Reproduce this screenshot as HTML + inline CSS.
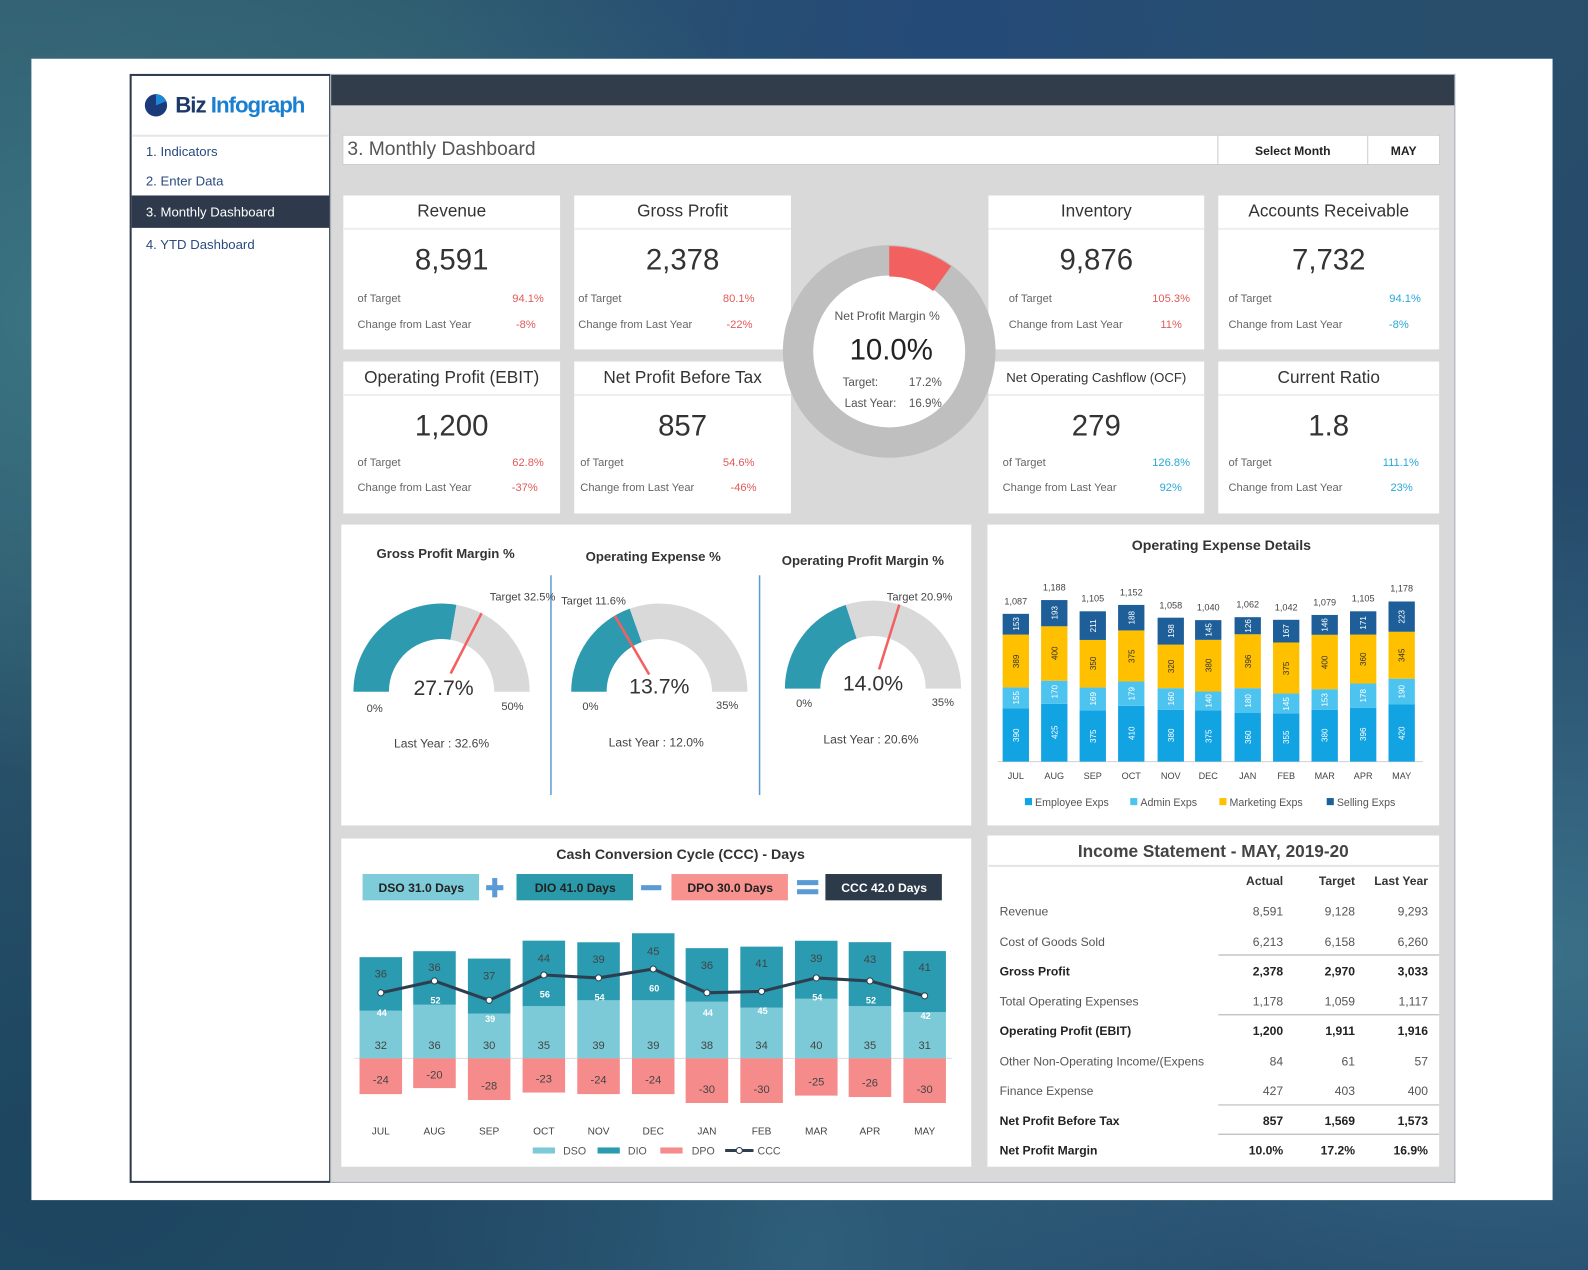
<!DOCTYPE html>
<html><head><meta charset="utf-8">
<style>
*{margin:0;padding:0;box-sizing:border-box}
html,body{width:1588px;height:1270px;overflow:hidden}
body{background:#274d66;background-image:radial-gradient(ellipse at 8% 25%,#3b7684 0,transparent 35%),radial-gradient(ellipse at 60% 3%,#244a78 0,transparent 40%),radial-gradient(ellipse at 97% 75%,#3a7088 0,transparent 35%),radial-gradient(ellipse at 5% 92%,#1c4560 0,transparent 35%),radial-gradient(ellipse at 50% 99%,#2e5f7a 0,transparent 40%),linear-gradient(135deg,#2f5a6c,#22446a);font-family:"Liberation Sans",sans-serif}
#w{position:absolute;left:0;top:0;width:1568px;height:1254px;transform:scale(1.01276);transform-origin:0 0}
.a{position:absolute}
.frame{left:31px;top:58px;width:1502px;height:1127px;background:#fff}
.side{left:128px;top:73px;width:199px;height:1095px;background:#fff;border:2px solid #2e3a4b}
.nav{position:absolute;left:14px;font-size:13px;color:#2a4a80}
.main{left:326px;top:73px;width:1111px;height:1095px;background:#d9d9d9;border:1px solid #a8b0bb}
.card{position:absolute;background:#fff}
.ct{position:absolute;left:0;right:0;top:6px;text-align:center;font-size:17px;color:#333}
.cl{position:absolute;left:0;right:0;top:32px;border-top:2px solid #eee}
.cn{position:absolute;left:0;right:0;top:48px;text-align:center;font-size:29px;color:#333}
.sm{position:absolute;font-size:11px;color:#666}
.r{color:#e05a5a}.c{color:#29a8d6}
.panel{position:absolute;background:#fff}
svg text{font-family:"Liberation Sans",sans-serif}
</style></head><body><div id="w">
<div class="a frame"></div>
<div class="a side">
 <svg class="a" style="left:10px;top:14px" width="30" height="30" viewBox="0 0 30 30"><circle cx="14" cy="15" r="11" fill="#1b3a7a"/><path d="M14 15 L14 4 A11 11 0 0 1 24 11 Z" fill="#1e88d8"/></svg>
 <div class="a" style="left:43px;top:16px;font-size:22px;letter-spacing:-1px;font-weight:bold"><span style="color:#1b3a6b">Biz</span> <span style="color:#1a7fd0">Infograph</span></div>
 <div class="a" style="left:0;right:0;top:58px;border-top:2px solid #e6e6e6"></div>
 <div class="nav" style="top:67px">1. Indicators</div>
 <div class="nav" style="top:96px">2. Enter Data</div>
 <div class="a" style="left:0;right:0;top:118px;height:32px;background:#2e3a4b"></div>
 <div class="nav" style="top:127px;color:#fff">3. Monthly Dashboard</div>
 <div class="nav" style="top:159px">4. YTD Dashboard</div>
</div>
<div class="a main">
 <div class="a" style="left:0;top:0;right:0;height:30px;background:#323d4c"></div>
</div>
<div class="a" style="left:338px;top:133px;width:1084px;height:30px;background:#fff;border:1px solid #c9c9c9"></div>
<div class="a" style="left:343px;top:137px;font-size:19px;color:#555">3. Monthly Dashboard</div>
<div class="a" style="left:1202px;top:134px;width:1px;height:28px;background:#ccc"></div>
<div class="a" style="left:1350px;top:134px;width:1px;height:28px;background:#ccc"></div>
<div class="a" style="left:1203px;top:142px;width:147px;text-align:center;font-size:12px;font-weight:bold;color:#222">Select Month</div>
<div class="a" style="left:1351px;top:142px;width:70px;text-align:center;font-size:12px;font-weight:bold;color:#222">MAY</div>

<div class="card" style="left:339px;top:193px;width:214px;height:152px"><div class="ct">Revenue</div><div class="cl"></div><div class="cn">8,591</div>
<div class="sm" style="left:14px;top:96px">of Target</div><div class="sm r" style="right:16px;top:96px">94.1%</div>
<div class="sm" style="left:14px;top:122px">Change from Last Year</div><div class="sm r" style="right:24px;top:122px">-8%</div></div>
<div class="card" style="left:567px;top:193px;width:214px;height:152px"><div class="ct">Gross Profit</div><div class="cl"></div><div class="cn">2,378</div>
<div class="sm" style="left:4px;top:96px">of Target</div><div class="sm r" style="right:36px;top:96px">80.1%</div>
<div class="sm" style="left:4px;top:122px">Change from Last Year</div><div class="sm r" style="right:38px;top:122px">-22%</div></div>
<div class="card" style="left:976px;top:193px;width:213px;height:152px"><div class="ct">Inventory</div><div class="cl"></div><div class="cn">9,876</div>
<div class="sm" style="left:20px;top:96px">of Target</div><div class="sm r" style="right:14px;top:96px">105.3%</div>
<div class="sm" style="left:20px;top:122px">Change from Last Year</div><div class="sm r" style="right:22px;top:122px">11%</div></div>
<div class="card" style="left:1203px;top:193px;width:218px;height:152px"><div class="ct">Accounts Receivable</div><div class="cl"></div><div class="cn">7,732</div>
<div class="sm" style="left:10px;top:96px">of Target</div><div class="sm c" style="right:18px;top:96px">94.1%</div>
<div class="sm" style="left:10px;top:122px">Change from Last Year</div><div class="sm c" style="right:30px;top:122px">-8%</div></div>

<div class="card" style="left:339px;top:357px;width:214px;height:150px"><div class="ct">Operating Profit (EBIT)</div><div class="cl"></div><div class="cn">1,200</div>
<div class="sm" style="left:14px;top:94px">of Target</div><div class="sm r" style="right:16px;top:94px">62.8%</div>
<div class="sm" style="left:14px;top:119px">Change from Last Year</div><div class="sm r" style="right:22px;top:119px">-37%</div></div>
<div class="card" style="left:567px;top:357px;width:214px;height:150px"><div class="ct">Net Profit Before Tax</div><div class="cl"></div><div class="cn">857</div>
<div class="sm" style="left:6px;top:94px">of Target</div><div class="sm r" style="right:36px;top:94px">54.6%</div>
<div class="sm" style="left:6px;top:119px">Change from Last Year</div><div class="sm r" style="right:34px;top:119px">-46%</div></div>
<div class="card" style="left:976px;top:357px;width:213px;height:150px"><div class="ct" style="font-size:13px;top:8px">Net Operating Cashflow (OCF)</div><div class="cl"></div><div class="cn">279</div>
<div class="sm" style="left:14px;top:94px">of Target</div><div class="sm c" style="right:14px;top:94px">126.8%</div>
<div class="sm" style="left:14px;top:119px">Change from Last Year</div><div class="sm c" style="right:22px;top:119px">92%</div></div>
<div class="card" style="left:1203px;top:357px;width:218px;height:150px"><div class="ct">Current Ratio</div><div class="cl"></div><div class="cn">1.8</div>
<div class="sm" style="left:10px;top:94px">of Target</div><div class="sm c" style="right:20px;top:94px">111.1%</div>
<div class="sm" style="left:10px;top:119px">Change from Last Year</div><div class="sm c" style="right:26px;top:119px">23%</div></div>

<svg class="a" style="left:770px;top:238px" width="220" height="220" viewBox="0 0 220 220">
<circle cx="108" cy="109" r="90" fill="none" stroke="#bfbfbf" stroke-width="30"/>
<circle cx="108" cy="109" r="75" fill="#fff"/>
<path d="M108 5 A104 104 0 0 1 169.1 24.9 L151.5 49.3 A74 74 0 0 0 108 35 Z" fill="#f36060"/>
<text x="106" y="78" font-size="12" fill="#555" text-anchor="middle">Net Profit Margin %</text>
<text x="110" y="117" font-size="29" fill="#222" text-anchor="middle">10.0%</text>
<text x="62" y="143" font-size="11.5" fill="#555">Target:</text><text x="160" y="143" font-size="11.5" fill="#555" text-anchor="end">17.2%</text>
<text x="64" y="164" font-size="11.5" fill="#555">Last Year:</text><text x="160" y="164" font-size="11.5" fill="#555" text-anchor="end">16.9%</text>
</svg>

<div class="panel" style="left:337px;top:518px;width:622px;height:297px"></div>
<svg class="a" style="left:0;top:0" width="1568" height="1254">
<g font-size="12" fill="#333">
<text x="440" y="551" text-anchor="middle" font-weight="bold" font-size="13">Gross Profit Margin %</text>
<text x="645" y="554" text-anchor="middle" font-weight="bold" font-size="13">Operating Expense %</text>
<text x="852" y="558" text-anchor="middle" font-weight="bold" font-size="13">Operating Profit Margin %</text>
</g>
<line x1="544" y1="568" x2="544" y2="785" stroke="#5b9bd5" stroke-width="1.5"/>
<line x1="750" y1="568" x2="750" y2="785" stroke="#5b9bd5" stroke-width="1.5"/>
<path d="M349,683 A87,87 0 0 1 450.7,597.2 L444.8,631.7 A52,52 0 0 0 384,683 Z" fill="#2e9aaf"/>
<path d="M450.7,597.2 A87,87 0 0 1 523,683 L488,683 A52,52 0 0 0 444.8,631.7 Z" fill="#d9d9d9"/>
<line x1="445" y1="665" x2="475.5" y2="605.5" stroke="#f36060" stroke-width="2.5"/>
<path d="M564,683 A87,87 0 0 1 621.8,601 L633.6,634 A52,52 0 0 0 599,683 Z" fill="#2e9aaf"/>
<path d="M621.8,601 A87,87 0 0 1 738,683 L703,683 A52,52 0 0 0 633.6,634 Z" fill="#d9d9d9"/>
<line x1="641" y1="666" x2="607" y2="608" stroke="#f36060" stroke-width="2.5"/>
<path d="M775,680 A87,87 0 0 1 835.1,597.3 L845.9,630.5 A52,52 0 0 0 810,680 Z" fill="#2e9aaf"/>
<path d="M835.1,597.3 A87,87 0 0 1 949,680 L914,680 A52,52 0 0 0 845.9,630.5 Z" fill="#d9d9d9"/>
<line x1="868" y1="661" x2="888" y2="597" stroke="#f36060" stroke-width="2.5"/>
<g fill="#333" font-size="21" text-anchor="middle">
<text x="438" y="686">27.7%</text><text x="651" y="685">13.7%</text><text x="862" y="682">14.0%</text></g>
<g fill="#444" font-size="11" text-anchor="middle">
<text x="516" y="593">Target 32.5%</text><text x="586" y="597">Target 11.6%</text><text x="908" y="593">Target 20.9%</text>
<text x="370" y="703">0%</text><text x="506" y="701">50%</text>
<text x="583" y="701">0%</text><text x="718" y="700">35%</text>
<text x="794" y="698">0%</text><text x="931" y="697">35%</text>
<text x="436" y="738" font-size="12">Last Year : 32.6%</text><text x="648" y="737" font-size="12">Last Year : 12.0%</text><text x="860" y="734" font-size="12">Last Year : 20.6%</text>
</g>
</svg>

<div class="panel" style="left:975px;top:518px;width:446px;height:297px"></div>
<svg class="a" style="left:0;top:0" width="1568" height="1254">
<text x="1206" y="543" text-anchor="middle" font-size="14" font-weight="bold" fill="#333">Operating Expense Details</text>
<line x1="985" y1="752" x2="1405" y2="752" stroke="#d0d0d0"/>
<g>
<rect x="990" y="699.6" width="26" height="52.4" fill="#12a3e3"/><rect x="990" y="678.8" width="26" height="20.8" fill="#4dc3f0"/><rect x="990" y="626.6" width="26" height="52.2" fill="#ffc000"/><rect x="990" y="606.1" width="26" height="20.5" fill="#1f5f99"/>
<rect x="1028" y="694.9" width="26" height="57.1" fill="#12a3e3"/><rect x="1028" y="672.1" width="26" height="22.8" fill="#4dc3f0"/><rect x="1028" y="618.4" width="26" height="53.7" fill="#ffc000"/><rect x="1028" y="592.5" width="26" height="25.9" fill="#1f5f99"/>
<rect x="1066" y="701.6" width="26" height="50.4" fill="#12a3e3"/><rect x="1066" y="678.9" width="26" height="22.7" fill="#4dc3f0"/><rect x="1066" y="631.9" width="26" height="47" fill="#ffc000"/><rect x="1066" y="603.6" width="26" height="28.3" fill="#1f5f99"/>
<rect x="1104" y="696.9" width="26" height="55.1" fill="#12a3e3"/><rect x="1104" y="672.9" width="26" height="24" fill="#4dc3f0"/><rect x="1104" y="622.5" width="26" height="50.4" fill="#ffc000"/><rect x="1104" y="597.3" width="26" height="25.2" fill="#1f5f99"/>
<rect x="1143" y="701" width="26" height="51" fill="#12a3e3"/><rect x="1143" y="679.5" width="26" height="21.5" fill="#4dc3f0"/><rect x="1143" y="636.5" width="26" height="43" fill="#ffc000"/><rect x="1143" y="609.9" width="26" height="26.6" fill="#1f5f99"/>
<rect x="1180" y="701.6" width="26" height="50.4" fill="#12a3e3"/><rect x="1180" y="682.8" width="26" height="18.8" fill="#4dc3f0"/><rect x="1180" y="631.8" width="26" height="51" fill="#ffc000"/><rect x="1180" y="612.3" width="26" height="19.5" fill="#1f5f99"/>
<rect x="1219" y="703.7" width="26" height="48.3" fill="#12a3e3"/><rect x="1219" y="679.5" width="26" height="24.2" fill="#4dc3f0"/><rect x="1219" y="626.3" width="26" height="53.2" fill="#ffc000"/><rect x="1219" y="609.4" width="26" height="16.9" fill="#1f5f99"/>
<rect x="1257" y="704.3" width="26" height="47.7" fill="#12a3e3"/><rect x="1257" y="684.8" width="26" height="19.5" fill="#4dc3f0"/><rect x="1257" y="634.4" width="26" height="50.4" fill="#ffc000"/><rect x="1257" y="612" width="26" height="22.4" fill="#1f5f99"/>
<rect x="1295" y="701" width="26" height="51" fill="#12a3e3"/><rect x="1295" y="680.5" width="26" height="20.5" fill="#4dc3f0"/><rect x="1295" y="626.8" width="26" height="53.7" fill="#ffc000"/><rect x="1295" y="607.2" width="26" height="19.6" fill="#1f5f99"/>
<rect x="1333" y="698.8" width="26" height="53.2" fill="#12a3e3"/><rect x="1333" y="674.9" width="26" height="23.9" fill="#4dc3f0"/><rect x="1333" y="626.6" width="26" height="48.3" fill="#ffc000"/><rect x="1333" y="603.6" width="26" height="23" fill="#1f5f99"/>
<rect x="1371" y="695.6" width="26" height="56.4" fill="#12a3e3"/><rect x="1371" y="670.1" width="26" height="25.5" fill="#4dc3f0"/><rect x="1371" y="623.8" width="26" height="46.3" fill="#ffc000"/><rect x="1371" y="593.9" width="26" height="29.9" fill="#1f5f99"/>
</g>
<g font-size="9" fill="#444" text-anchor="middle">
<text x="1003" y="597">1,087</text><text x="1041" y="583">1,188</text><text x="1079" y="594">1,105</text><text x="1117" y="588">1,152</text><text x="1156" y="601">1,058</text><text x="1193" y="603">1,040</text><text x="1232" y="600">1,062</text><text x="1270" y="603">1,042</text><text x="1308" y="598">1,079</text><text x="1346" y="594">1,105</text><text x="1384" y="584">1,178</text>
<text x="1003" y="769">JUL</text><text x="1041" y="769">AUG</text><text x="1079" y="769">SEP</text><text x="1117" y="769">OCT</text><text x="1156" y="769">NOV</text><text x="1193" y="769">DEC</text><text x="1232" y="769">JAN</text><text x="1270" y="769">FEB</text><text x="1308" y="769">MAR</text><text x="1346" y="769">APR</text><text x="1384" y="769">MAY</text>
</g>
<g font-size="8" fill="#fff" text-anchor="middle">
<text transform="translate(1006,726) rotate(-90)">390</text><text transform="translate(1006,689) rotate(-90)">155</text><text transform="translate(1006,653) rotate(-90)" fill="#333">389</text><text transform="translate(1006,616) rotate(-90)">153</text>
<text transform="translate(1044,723) rotate(-90)">425</text><text transform="translate(1044,683) rotate(-90)">170</text><text transform="translate(1044,645) rotate(-90)" fill="#333">400</text><text transform="translate(1044,605) rotate(-90)">193</text>
<text transform="translate(1082,727) rotate(-90)">375</text><text transform="translate(1082,690) rotate(-90)">169</text><text transform="translate(1082,655) rotate(-90)" fill="#333">350</text><text transform="translate(1082,618) rotate(-90)">211</text>
<text transform="translate(1120,724) rotate(-90)">410</text><text transform="translate(1120,685) rotate(-90)">179</text><text transform="translate(1120,648) rotate(-90)" fill="#333">375</text><text transform="translate(1120,610) rotate(-90)">188</text>
<text transform="translate(1159,726) rotate(-90)">380</text><text transform="translate(1159,690) rotate(-90)">160</text><text transform="translate(1159,658) rotate(-90)" fill="#333">320</text><text transform="translate(1159,623) rotate(-90)">198</text>
<text transform="translate(1196,727) rotate(-90)">375</text><text transform="translate(1196,692) rotate(-90)">140</text><text transform="translate(1196,657) rotate(-90)" fill="#333">380</text><text transform="translate(1196,622) rotate(-90)">145</text>
<text transform="translate(1235,728) rotate(-90)">360</text><text transform="translate(1235,692) rotate(-90)">180</text><text transform="translate(1235,653) rotate(-90)" fill="#333">396</text><text transform="translate(1235,618) rotate(-90)">126</text>
<text transform="translate(1273,728) rotate(-90)">355</text><text transform="translate(1273,695) rotate(-90)">145</text><text transform="translate(1273,660) rotate(-90)" fill="#333">375</text><text transform="translate(1273,623) rotate(-90)">167</text>
<text transform="translate(1311,726) rotate(-90)">380</text><text transform="translate(1311,691) rotate(-90)">153</text><text transform="translate(1311,654) rotate(-90)" fill="#333">400</text><text transform="translate(1311,617) rotate(-90)">146</text>
<text transform="translate(1349,725) rotate(-90)">396</text><text transform="translate(1349,687) rotate(-90)">178</text><text transform="translate(1349,651) rotate(-90)" fill="#333">360</text><text transform="translate(1349,615) rotate(-90)">171</text>
<text transform="translate(1387,724) rotate(-90)">420</text><text transform="translate(1387,683) rotate(-90)">190</text><text transform="translate(1387,647) rotate(-90)" fill="#333">345</text><text transform="translate(1387,609) rotate(-90)">223</text>
</g>
<g font-size="10.5" fill="#555">
<rect x="1012" y="788" width="7" height="7" fill="#12a3e3"/><text x="1022" y="796">Employee Exps</text>
<rect x="1116" y="788" width="7" height="7" fill="#4dc3f0"/><text x="1126" y="796">Admin Exps</text>
<rect x="1204" y="788" width="7" height="7" fill="#ffc000"/><text x="1214" y="796">Marketing Exps</text>
<rect x="1310" y="788" width="7" height="7" fill="#1f5f99"/><text x="1320" y="796">Selling Exps</text>
</g>
</svg>

<div class="panel" style="left:337px;top:828px;width:622px;height:324px"></div>
<svg class="a" style="left:0;top:0" width="1568" height="1254">
<text x="672" y="848" text-anchor="middle" font-size="14" font-weight="bold" fill="#333">Cash Conversion Cycle (CCC) - Days</text>
<rect x="358" y="863" width="115" height="26" fill="#7ecbd9"/><text x="416" y="881" text-anchor="middle" font-size="12" font-weight="bold" fill="#222">DSO 31.0 Days</text>
<rect x="480" y="874" width="17" height="5" fill="#5b9bd5"/><rect x="486" y="867" width="5" height="19" fill="#5b9bd5"/>
<rect x="510" y="863" width="115" height="26" fill="#2a9aab"/><text x="568" y="881" text-anchor="middle" font-size="12" font-weight="bold" fill="#222">DIO 41.0 Days</text>
<rect x="633" y="874" width="20" height="5" fill="#5b9bd5"/>
<rect x="663" y="863" width="115" height="26" fill="#f7928f"/><text x="721" y="881" text-anchor="middle" font-size="12" font-weight="bold" fill="#222">DPO 30.0 Days</text>
<rect x="787" y="869" width="21" height="5" fill="#5b9bd5"/><rect x="787" y="878" width="21" height="5" fill="#5b9bd5"/>
<rect x="815" y="863" width="115" height="26" fill="#2d3a4a"/><text x="873" y="881" text-anchor="middle" font-size="12" font-weight="bold" fill="#fff">CCC 42.0 Days</text>
<line x1="350" y1="1045" x2="940" y2="1045" stroke="#ddd"/>
<g fill="#7ccad8">
<rect x="355" y="998" width="42" height="47"/><rect x="408" y="992.1" width="42" height="52.9"/><rect x="462" y="1000.9" width="42" height="44.1"/><rect x="516" y="993.5" width="42" height="51.5"/><rect x="570" y="987.7" width="42" height="57.3"/><rect x="624" y="987.7" width="42" height="57.3"/><rect x="677" y="989.1" width="42" height="55.9"/><rect x="731" y="995" width="42" height="50"/><rect x="785" y="986.2" width="42" height="58.8"/><rect x="838" y="993.5" width="42" height="51.5"/><rect x="892" y="999.4" width="42" height="45.6"/></g>
<g fill="#2a9bb0">
<rect x="355" y="945.1" width="42" height="52.9"/><rect x="408" y="939.2" width="42" height="52.9"/><rect x="462" y="946.5" width="42" height="54.4"/><rect x="516" y="928.8" width="42" height="64.7"/><rect x="570" y="930.4" width="42" height="57.3"/><rect x="624" y="921.5" width="42" height="66.2"/><rect x="677" y="936.2" width="42" height="52.9"/><rect x="731" y="934.7" width="42" height="60.3"/><rect x="785" y="928.9" width="42" height="57.3"/><rect x="838" y="930.3" width="42" height="63.2"/><rect x="892" y="939.1" width="42" height="60.3"/></g>
<g fill="#f58b8b">
<rect x="355" y="1045" width="42" height="35.3"/><rect x="408" y="1045" width="42" height="29.4"/><rect x="462" y="1045" width="42" height="41.2"/><rect x="516" y="1045" width="42" height="33.8"/><rect x="570" y="1045" width="42" height="35.3"/><rect x="624" y="1045" width="42" height="35.3"/><rect x="677" y="1045" width="42" height="44.1"/><rect x="731" y="1045" width="42" height="44.1"/><rect x="785" y="1045" width="42" height="36.8"/><rect x="838" y="1045" width="42" height="38.2"/><rect x="892" y="1045" width="42" height="44.1"/></g>
<polyline points="376,980.3 429,968.6 483,987.7 537,962.7 591,965.6 645,956.8 698,980.3 752,978.9 806,965.6 859,968.6 913,983.3" fill="none" stroke="#2c3e50" stroke-width="3"/>
<g fill="#fff" stroke="#2c3e50" stroke-width="1"><circle cx="376" cy="980.3" r="3"/><circle cx="429" cy="968.6" r="3"/><circle cx="483" cy="987.7" r="3"/><circle cx="537" cy="962.7" r="3"/><circle cx="591" cy="965.6" r="3"/><circle cx="645" cy="956.8" r="3"/><circle cx="698" cy="980.3" r="3"/><circle cx="752" cy="978.9" r="3"/><circle cx="806" cy="965.6" r="3"/><circle cx="859" cy="968.6" r="3"/><circle cx="913" cy="983.3" r="3"/></g>
<g font-size="11" fill="#444" text-anchor="middle">
<text x="376" y="965">36</text><text x="429" y="959">36</text><text x="483" y="967">37</text><text x="537" y="950">44</text><text x="591" y="951">39</text><text x="645" y="943">45</text><text x="698" y="957">36</text><text x="752" y="955">41</text><text x="806" y="950">39</text><text x="859" y="951">43</text><text x="913" y="959">41</text>
<text x="376" y="1036">32</text><text x="429" y="1036">36</text><text x="483" y="1036">30</text><text x="537" y="1036">35</text><text x="591" y="1036">39</text><text x="645" y="1036">39</text><text x="698" y="1036">38</text><text x="752" y="1036">34</text><text x="806" y="1036">40</text><text x="859" y="1036">35</text><text x="913" y="1036">31</text>
<text x="376" y="1070">-24</text><text x="429" y="1065">-20</text><text x="483" y="1076">-28</text><text x="537" y="1069">-23</text><text x="591" y="1070">-24</text><text x="645" y="1070">-24</text><text x="698" y="1079">-30</text><text x="752" y="1079">-30</text><text x="806" y="1072">-25</text><text x="859" y="1073">-26</text><text x="913" y="1079">-30</text>
<text x="376" y="1120" font-size="10">JUL</text><text x="429" y="1120" font-size="10">AUG</text><text x="483" y="1120" font-size="10">SEP</text><text x="537" y="1120" font-size="10">OCT</text><text x="591" y="1120" font-size="10">NOV</text><text x="645" y="1120" font-size="10">DEC</text><text x="698" y="1120" font-size="10">JAN</text><text x="752" y="1120" font-size="10">FEB</text><text x="806" y="1120" font-size="10">MAR</text><text x="859" y="1120" font-size="10">APR</text><text x="913" y="1120" font-size="10">MAY</text>
</g>
<g font-size="9" fill="#fff" font-weight="bold" text-anchor="middle">
<text x="377" y="1003">44</text><text x="430" y="991">52</text><text x="484" y="1009">39</text><text x="538" y="985">56</text><text x="592" y="988">54</text><text x="646" y="979">60</text><text x="699" y="1003">44</text><text x="753" y="1001">45</text><text x="807" y="988">54</text><text x="860" y="991">52</text><text x="914" y="1006">42</text>
</g>
<g font-size="10.5" fill="#555">
<rect x="526" y="1133" width="22" height="6" fill="#7ccad8"/><text x="556" y="1140">DSO</text>
<rect x="590" y="1133" width="22" height="6" fill="#2a9bb0"/><text x="620" y="1140">DIO</text>
<rect x="652" y="1133" width="22" height="6" fill="#f58b8b"/><text x="683" y="1140">DPO</text>
<line x1="716" y1="1136" x2="744" y2="1136" stroke="#2c3e50" stroke-width="3"/><circle cx="730" cy="1136" r="3" fill="#fff" stroke="#2c3e50"/><text x="748" y="1140">CCC</text>
</g>
</svg>

<div class="panel" style="left:975px;top:825px;width:446px;height:327px"></div>
<svg class="a" style="left:0;top:0" width="1568" height="1254">
<text x="1198" y="846" text-anchor="middle" font-size="17" font-weight="bold" fill="#444">Income Statement - MAY, 2019-20</text>
<line x1="976" y1="855" x2="1421" y2="855" stroke="#e3e3e3" stroke-width="2"/>
<g font-size="12" fill="#333" font-weight="bold" text-anchor="end"><text x="1267" y="874">Actual</text><text x="1338" y="874">Target</text><text x="1410" y="874">Last Year</text></g>
<g stroke="#bbb" stroke-width="1.2"><line x1="1203" y1="943" x2="1421" y2="943"/><line x1="1203" y1="1002" x2="1421" y2="1002"/><line x1="1203" y1="1091" x2="1421" y2="1091"/><line x1="1203" y1="1120" x2="1421" y2="1120"/></g>
<g font-size="12" fill="#555">
<text x="987" y="904">Revenue</text><text x="987" y="934">Cost of Goods Sold</text>
<text x="987" y="963" font-weight="bold" fill="#222">Gross Profit</text>
<text x="987" y="993">Total Operating Expenses</text>
<text x="987" y="1022" font-weight="bold" fill="#222">Operating Profit (EBIT)</text>
<text x="987" y="1052">Other Non-Operating Income/(Expens</text>
<text x="987" y="1081">Finance Expense</text>
<text x="987" y="1111" font-weight="bold" fill="#222">Net Profit Before Tax</text>
<text x="987" y="1140" font-weight="bold" fill="#222">Net Profit Margin</text>
</g>
<g font-size="12" fill="#555" text-anchor="end">
<text x="1267" y="904">8,591</text><text x="1338" y="904">9,128</text><text x="1410" y="904">9,293</text>
<text x="1267" y="934">6,213</text><text x="1338" y="934">6,158</text><text x="1410" y="934">6,260</text>
<text x="1267" y="993">1,178</text><text x="1338" y="993">1,059</text><text x="1410" y="993">1,117</text>
<text x="1267" y="1052">84</text><text x="1338" y="1052">61</text><text x="1410" y="1052">57</text>
<text x="1267" y="1081">427</text><text x="1338" y="1081">403</text><text x="1410" y="1081">400</text>
</g>
<g font-size="12" fill="#222" font-weight="bold" text-anchor="end">
<text x="1267" y="963">2,378</text><text x="1338" y="963">2,970</text><text x="1410" y="963">3,033</text>
<text x="1267" y="1022">1,200</text><text x="1338" y="1022">1,911</text><text x="1410" y="1022">1,916</text>
<text x="1267" y="1111">857</text><text x="1338" y="1111">1,569</text><text x="1410" y="1111">1,573</text>
<text x="1267" y="1140">10.0%</text><text x="1338" y="1140">17.2%</text><text x="1410" y="1140">16.9%</text>
</g>
</svg>
</div></body></html>
